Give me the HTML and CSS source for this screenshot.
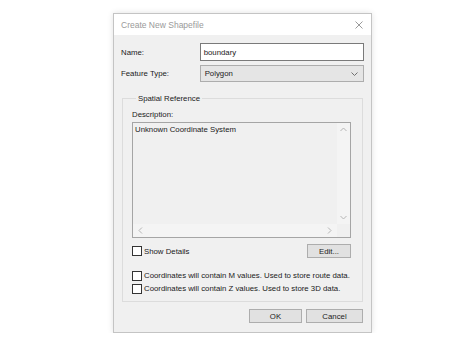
FILE: index.html
```html
<!DOCTYPE html>
<html lang="en">
<head>
    <meta charset="UTF-8">
    <meta name="viewport" content="width=device-width, initial-scale=1.0">
    <title>Create New Shapefile</title>
    <link rel="stylesheet" href="styles.css">
</head>
<body>
    <div class="dialog">
        <!-- title bar -->
        <div class="titlebar">
            <span class="title">Create New Shapefile</span>
            <svg class="close" width="8" height="8" viewBox="0 0 8 8">
                <path d="M0.5 0.5 L7.5 7.5 M7.5 0.5 L0.5 7.5" stroke="#9a9a9a" stroke-width="1" fill="none"/>
            </svg>
        </div>

        <div class="content">
            <div class="row">
                <label class="label">Name:</label>
                <div class="input">boundary</div>
            </div>
            <div class="row">
                <label class="label">Feature Type:</label>
                <div class="select">
                    <span>Polygon</span>
                    <svg width="7" height="4" viewBox="0 0 7 4">
                        <path d="M0.5 0.5 L3.5 3.5 L6.5 0.5" stroke="#707070" stroke-width="1" fill="none"/>
                    </svg>
                </div>
            </div>

            <fieldset class="group">
                <legend>Spatial Reference</legend>
                <div class="desc-label">Description:</div>
                <div class="textbox">
                    <div class="text-area">Unknown Coordinate System</div>
                    <div class="vscroll">
                        <svg width="7" height="5" viewBox="0 0 7 5"><path d="M0.5 4 L3.5 1 L6.5 4" stroke="#b5b5b5" fill="none"/></svg>
                        <svg width="7" height="5" viewBox="0 0 7 5"><path d="M0.5 1 L3.5 4 L6.5 1" stroke="#b5b5b5" fill="none"/></svg>
                    </div>
                    <div class="hscroll">
                        <svg width="5" height="7" viewBox="0 0 5 7"><path d="M4 0.5 L1 3.5 L4 6.5" stroke="#b5b5b5" fill="none"/></svg>
                        <svg width="5" height="7" viewBox="0 0 5 7"><path d="M1 0.5 L4 3.5 L1 6.5" stroke="#b5b5b5" fill="none"/></svg>
                    </div>
                    <div class="corner"></div>
                </div>

                <div class="details-row">
                    <label class="check"><span class="box"></span>Show Details</label>
                    <button class="button edit">Edit...</button>
                </div>

                <label class="check first"><span class="box"></span>Coordinates will contain M values. Used to store route data.</label>
                <label class="check"><span class="box"></span>Coordinates will contain Z values. Used to store 3D data.</label>
            </fieldset>

            <div class="footer">
                <button class="button ok">OK</button>
                <button class="button cancel">Cancel</button>
            </div>
        </div>
    </div>
</body>
</html>
```

FILE: styles.css
```css
* {
    box-sizing: border-box;
}

html, body {
    margin: 0;
    padding: 0;
    background: #fff;
    font-family: 'Liberation Sans', Arial, sans-serif;
    font-size: 7.8px;
    color: #1a1a1a;
}

body {
    padding: 13px 0 0 113px;
}

.dialog {
    width: 259px;
    height: 320px;
    background: #f0f0f0;
    border: 1px solid #c4c4c4;
    box-shadow: 0 0 6px rgba(0, 0, 0, 0.12);
    display: flex;
    flex-direction: column;
}

.titlebar {
    height: 21px;
    background: #fff;
    display: flex;
    align-items: center;
    justify-content: space-between;
    padding: 0 8px 0 7px;
}

.title {
    color: #9a9a9a;
    font-size: 8.5px;
}

.content {
    padding: 8px 7px 0 7px;
    display: flex;
    flex-direction: column;
}

.row {
    display: flex;
    align-items: center;
    margin-bottom: 4px;
}

.label {
    width: 79px;
}

.input {
    width: 165px;
    height: 18px;
    background: #fff;
    border: 1px solid #7a7a7a;
    padding: 0 3px;
    display: flex;
    align-items: center;
}

.select {
    width: 165px;
    height: 17px;
    background: #e5e5e5;
    border: 1px solid #adadad;
    padding: 0 5px 0 4px;
    display: flex;
    align-items: center;
    justify-content: space-between;
}

.group {
    margin: 8px 1px 0 1px;
    padding: 0 11px 6px 9px;
    border: 1px solid #dcdcdc;
    border-radius: 0;
    min-width: 0;
}

.group legend {
    padding: 0 2px;
    margin-left: 4px;
}

.desc-label {
    margin-top: 7px;
    margin-bottom: 3px;
}

.textbox {
    height: 116px;
    border: 1px solid #a5a5a5;
    display: grid;
    grid-template-columns: 1fr 13px;
    grid-template-rows: 1fr 13px;
    background: #f0f0f0;
}

.text-area {
    padding: 2px 2px;
}

.vscroll {
    background: #f4f4f4;
    display: flex;
    flex-direction: column;
    justify-content: space-between;
    align-items: center;
    padding: 4px 0;
}

.hscroll {
    background: #f4f4f4;
    display: flex;
    justify-content: space-between;
    align-items: center;
    padding: 0 5px;
}

.corner {
    background: #f0f0f0;
}

.details-row {
    display: flex;
    align-items: center;
    justify-content: space-between;
    margin-top: 6px;
}

.check {
    display: flex;
    align-items: center;
    height: 13px;
    white-space: nowrap;
}

.check.first {
    margin-top: 11px;
}

.box {
    width: 10px;
    height: 10px;
    border: 1px solid #333;
    background: #fff;
    margin-right: 2px;
    flex-shrink: 0;
}

.button {
    font-family: inherit;
    font-size: 7.8px;
    color: #1a1a1a;
    background: #e1e1e1;
    border: 1px solid #adadad;
    padding: 0;
    height: 14px;
}

.edit {
    width: 44px;
}

.footer {
    display: flex;
    justify-content: flex-end;
    gap: 4px;
    margin-top: 7px;
    padding-right: 1px;
}

.ok {
    width: 53px;
}

.cancel {
    width: 57px;
}
```
